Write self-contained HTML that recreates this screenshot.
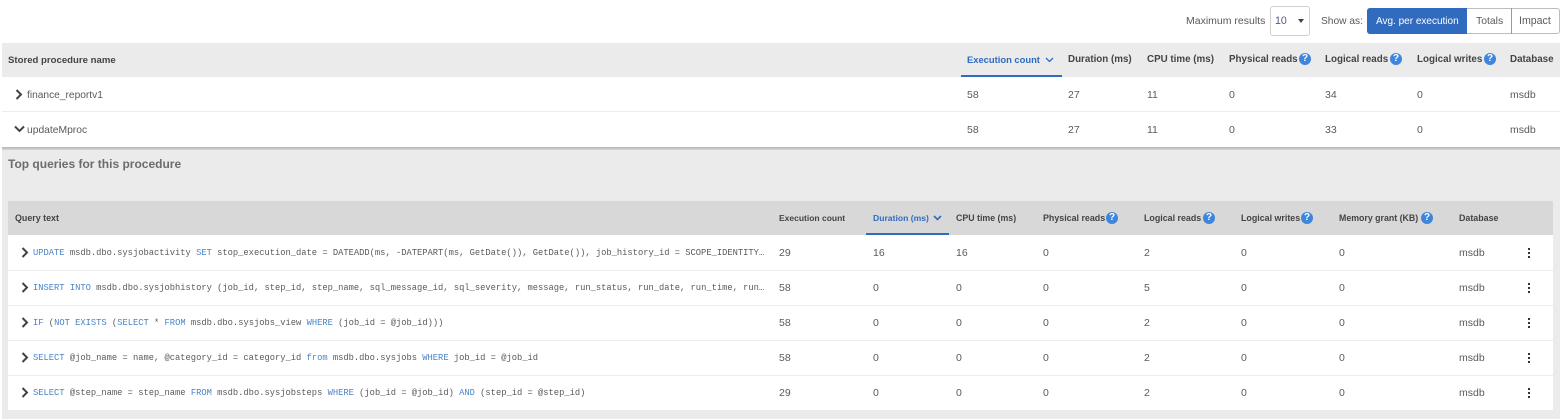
<!DOCTYPE html>
<html>
<head>
<meta charset="utf-8">
<style>
html,body{margin:0;padding:0;background:#fff;width:1562px;height:419px;overflow:hidden}
body{position:relative;font-family:"Liberation Sans",sans-serif;color:#5a5a5a;font-size:10.5px;filter:blur(.3px)}
div,svg{position:absolute}
.t{white-space:nowrap;line-height:14px;height:14px;margin-top:1px}
.h{font-weight:bold;color:#444;font-size:9.8px}
.s{font-weight:bold;color:#444;font-size:8.9px}
.b{color:#2f6bc0}
.v{font-size:10.5px;color:#5a5a5a}
.c{font-family:"Liberation Mono",monospace;font-size:8.77px;color:#5a5a5a;overflow:hidden;text-overflow:ellipsis;width:732px;left:33px}
.c i{font-style:normal;color:#4a84c8}
.q{width:12px;height:12px;border-radius:6px;background:#3d86dc;color:#fff;font-weight:bold;font-size:10px;line-height:12px;text-align:center}
.l{height:1px;background:#ececec}
.k{width:2px;height:2px;background:#333;left:1528px}
</style>
</head>
<body>
<!-- toolbar -->
<div class="t" style="left:1186px;top:13px;font-size:10.5px;color:#5a5a5a">Maximum results</div>
<div style="left:1270px;top:6px;width:38px;height:28px;border:1px solid #d0d0d0;border-radius:3px;background:#fff"></div>
<div class="t" style="left:1275px;top:13px;font-size:10.6px;color:#4a5f7c">10</div>
<div style="left:1298px;top:19px;width:0;height:0;border-left:3px solid transparent;border-right:3px solid transparent;border-top:4px solid #444"></div>
<div class="t" style="left:1321px;top:14px;font-size:10.2px;color:#5a5a5a">Show as:</div>
<div style="left:1367px;top:8px;width:193px;height:26px;border-radius:3px;background:#fff;box-shadow:inset 0 0 0 1px #bdbdbd"></div>
<div style="left:1367px;top:8px;width:100px;height:26px;border-radius:3px 0 0 3px;background:#316bbf"></div>
<div style="left:1511px;top:8px;width:1px;height:26px;background:#9a9a9a"></div>
<div class="t" style="left:1376px;top:14px;font-size:10px;color:#fff">Avg. per execution</div>
<div class="t" style="left:1476px;top:14px;font-size:10.4px;color:#5a5a5a">Totals</div>
<div class="t" style="left:1519px;top:13px;font-size:10.6px;color:#5a5a5a">Impact</div>

<!-- main header -->
<div style="left:2px;top:43px;width:1558px;height:34px;background:#ebebeb"></div>
<div class="t h" style="left:8px;top:53px;font-size:9.6px">Stored procedure name</div>
<div class="t h b" style="left:967px;top:52px;font-size:9.4px">Execution count</div>
<svg style="left:1045px;top:57px" width="9" height="6" viewBox="0 0 9 6"><path d="M1 1l3.500 3.500L8 1" fill="none" stroke="#2f6bc0" stroke-width="1.300"/></svg>
<div style="left:961px;top:75px;width:101px;height:2px;background:#316bbf"></div>
<div class="t h" style="left:1068px;top:52px">Duration (ms)</div>
<div class="t h" style="left:1147px;top:52px">CPU time (ms)</div>
<div class="t h" style="left:1229px;top:52px">Physical reads</div>
<div class="q" style="left:1299px;top:53px">?</div>
<div class="t h" style="left:1325px;top:52px">Logical reads</div>
<div class="q" style="left:1390px;top:53px">?</div>
<div class="t h" style="left:1417px;top:52px">Logical writes</div>
<div class="q" style="left:1484px;top:53px">?</div>
<div class="t h" style="left:1510px;top:52px">Database</div>

<!-- row 1 -->
<svg style="left:15px;top:89px" width="8" height="11" viewBox="0 0 8 11"><path d="M1.500 1l4.500 4.500L1.500 10" fill="none" stroke="#444" stroke-width="2"/></svg>
<div class="t v" style="left:27px;top:88px;font-size:10.2px">finance_reportv1</div>
<div class="t v" style="left:967px;top:87px">58</div>
<div class="t v" style="left:1068px;top:87px">27</div>
<div class="t v" style="left:1147px;top:87px">11</div>
<div class="t v" style="left:1229px;top:87px">0</div>
<div class="t v" style="left:1325px;top:87px">34</div>
<div class="t v" style="left:1417px;top:87px">0</div>
<div class="t v" style="left:1510px;top:87px">msdb</div>
<div class="l" style="left:2px;top:111px;width:1558px"></div>

<!-- row 2 -->
<svg style="left:14px;top:125px" width="11" height="8" viewBox="0 0 11 8"><path d="M1 1.500l4.500 4.500L10 1.500" fill="none" stroke="#444" stroke-width="2"/></svg>
<div class="t v" style="left:27px;top:123px;font-size:10.3px">updateMproc</div>
<div class="t v" style="left:967px;top:122px">58</div>
<div class="t v" style="left:1068px;top:122px">27</div>
<div class="t v" style="left:1147px;top:122px">11</div>
<div class="t v" style="left:1229px;top:122px">0</div>
<div class="t v" style="left:1325px;top:122px">33</div>
<div class="t v" style="left:1417px;top:122px">0</div>
<div class="t v" style="left:1510px;top:122px">msdb</div>

<!-- panel -->
<div style="left:2px;top:147px;width:1558px;height:272px;background:#ebebeb"></div>
<div style="left:2px;top:147px;width:1558px;height:3px;background:linear-gradient(#b5b5b5,#d6d6d6)"></div>
<div class="t" style="left:8px;top:156px;font-weight:bold;font-size:12px;color:#6c6c6c">Top queries for this procedure</div>

<!-- inner table -->
<div style="left:8px;top:201px;width:1545px;height:34px;background:#d8d8d8"></div>
<div style="left:8px;top:235px;width:1545px;height:175px;background:#fff"></div>
<div class="t s" style="left:15px;top:210px">Query text</div>
<div class="t s" style="left:779px;top:210px;font-size:8.5px">Execution count</div>
<div class="t s b" style="left:873px;top:210px;font-size:8.6px">Duration (ms)</div>
<svg style="left:933px;top:215px" width="9" height="6" viewBox="0 0 9 6"><path d="M1 1l3.500 3.500L8 1" fill="none" stroke="#2f6bc0" stroke-width="1.600"/></svg>
<div style="left:866px;top:233px;width:83px;height:2px;background:#316bbf"></div>
<div class="t s" style="left:956px;top:210px;font-size:8.8px">CPU time (ms)</div>
<div class="t s" style="left:1043px;top:210px">Physical reads</div>
<div class="q" style="left:1106px;top:212px">?</div>
<div class="t s" style="left:1144px;top:210px">Logical reads</div>
<div class="q" style="left:1203px;top:212px">?</div>
<div class="t s" style="left:1241px;top:210px">Logical writes</div>
<div class="q" style="left:1301px;top:212px">?</div>
<div class="t s" style="left:1339px;top:210px;font-size:8.8px">Memory grant (KB)</div>
<div class="q" style="left:1421px;top:212px">?</div>
<div class="t s" style="left:1459px;top:210px">Database</div>

<!-- inner rows -->
<svg style="left:21px;top:247px" width="8" height="11" viewBox="0 0 8 11"><path d="M1.500 1l4.500 4.500L1.500 10" fill="none" stroke="#444" stroke-width="2"/></svg>
<div class="t c" style="top:245px"><i>UPDATE</i> msdb.dbo.sysjobactivity <i>SET</i> stop_execution_date = DATEADD(ms, -DATEPART(ms, GetDate()), GetDate()), job_history_id = SCOPE_IDENTITY() WHERE (job_id = @job_id)</div>
<div class="t v" style="left:779px;top:245px">29</div>
<div class="t v" style="left:873px;top:245px">16</div>
<div class="t v" style="left:956px;top:245px">16</div>
<div class="t v" style="left:1043px;top:245px">0</div>
<div class="t v" style="left:1144px;top:245px">2</div>
<div class="t v" style="left:1241px;top:245px">0</div>
<div class="t v" style="left:1339px;top:245px">0</div>
<div class="t v" style="left:1459px;top:245px">msdb</div>
<div class="k" style="top:248px"></div><div class="k" style="top:252px"></div><div class="k" style="top:256px"></div>
<div class="l" style="left:8px;top:270px;width:1545px"></div>

<svg style="left:21px;top:282px" width="8" height="11" viewBox="0 0 8 11"><path d="M1.500 1l4.500 4.500L1.500 10" fill="none" stroke="#444" stroke-width="2"/></svg>
<div class="t c" style="top:280px"><i>INSERT INTO</i> msdb.dbo.sysjobhistory (job_id, step_id, step_name, sql_message_id, sql_severity, message, run_status, run_date, run_time, run_duration, operator_id)</div>
<div class="t v" style="left:779px;top:280px">58</div>
<div class="t v" style="left:873px;top:280px">0</div>
<div class="t v" style="left:956px;top:280px">0</div>
<div class="t v" style="left:1043px;top:280px">0</div>
<div class="t v" style="left:1144px;top:280px">5</div>
<div class="t v" style="left:1241px;top:280px">0</div>
<div class="t v" style="left:1339px;top:280px">0</div>
<div class="t v" style="left:1459px;top:280px">msdb</div>
<div class="k" style="top:283px"></div><div class="k" style="top:287px"></div><div class="k" style="top:291px"></div>
<div class="l" style="left:8px;top:305px;width:1545px"></div>

<svg style="left:21px;top:317px" width="8" height="11" viewBox="0 0 8 11"><path d="M1.500 1l4.500 4.500L1.500 10" fill="none" stroke="#444" stroke-width="2"/></svg>
<div class="t c" style="top:315px"><i>IF</i> (<i>NOT EXISTS</i> (<i>SELECT</i> * <i>FROM</i> msdb.dbo.sysjobs_view <i>WHERE</i> (job_id = @job_id)))</div>
<div class="t v" style="left:779px;top:315px">58</div>
<div class="t v" style="left:873px;top:315px">0</div>
<div class="t v" style="left:956px;top:315px">0</div>
<div class="t v" style="left:1043px;top:315px">0</div>
<div class="t v" style="left:1144px;top:315px">2</div>
<div class="t v" style="left:1241px;top:315px">0</div>
<div class="t v" style="left:1339px;top:315px">0</div>
<div class="t v" style="left:1459px;top:315px">msdb</div>
<div class="k" style="top:318px"></div><div class="k" style="top:322px"></div><div class="k" style="top:326px"></div>
<div class="l" style="left:8px;top:340px;width:1545px"></div>

<svg style="left:21px;top:352px" width="8" height="11" viewBox="0 0 8 11"><path d="M1.500 1l4.500 4.500L1.500 10" fill="none" stroke="#444" stroke-width="2"/></svg>
<div class="t c" style="top:350px"><i>SELECT</i> @job_name = name, @category_id = category_id <i>from</i> msdb.dbo.sysjobs <i>WHERE</i> job_id = @job_id</div>
<div class="t v" style="left:779px;top:350px">58</div>
<div class="t v" style="left:873px;top:350px">0</div>
<div class="t v" style="left:956px;top:350px">0</div>
<div class="t v" style="left:1043px;top:350px">0</div>
<div class="t v" style="left:1144px;top:350px">2</div>
<div class="t v" style="left:1241px;top:350px">0</div>
<div class="t v" style="left:1339px;top:350px">0</div>
<div class="t v" style="left:1459px;top:350px">msdb</div>
<div class="k" style="top:353px"></div><div class="k" style="top:357px"></div><div class="k" style="top:361px"></div>
<div class="l" style="left:8px;top:375px;width:1545px"></div>

<svg style="left:21px;top:387px" width="8" height="11" viewBox="0 0 8 11"><path d="M1.500 1l4.500 4.500L1.500 10" fill="none" stroke="#444" stroke-width="2"/></svg>
<div class="t c" style="top:385px"><i>SELECT</i> @step_name = step_name <i>FROM</i> msdb.dbo.sysjobsteps <i>WHERE</i> (job_id = @job_id) <i>AND</i> (step_id = @step_id)</div>
<div class="t v" style="left:779px;top:385px">29</div>
<div class="t v" style="left:873px;top:385px">0</div>
<div class="t v" style="left:956px;top:385px">0</div>
<div class="t v" style="left:1043px;top:385px">0</div>
<div class="t v" style="left:1144px;top:385px">2</div>
<div class="t v" style="left:1241px;top:385px">0</div>
<div class="t v" style="left:1339px;top:385px">0</div>
<div class="t v" style="left:1459px;top:385px">msdb</div>
<div class="k" style="top:388px"></div><div class="k" style="top:392px"></div><div class="k" style="top:396px"></div>
</body>
</html>
